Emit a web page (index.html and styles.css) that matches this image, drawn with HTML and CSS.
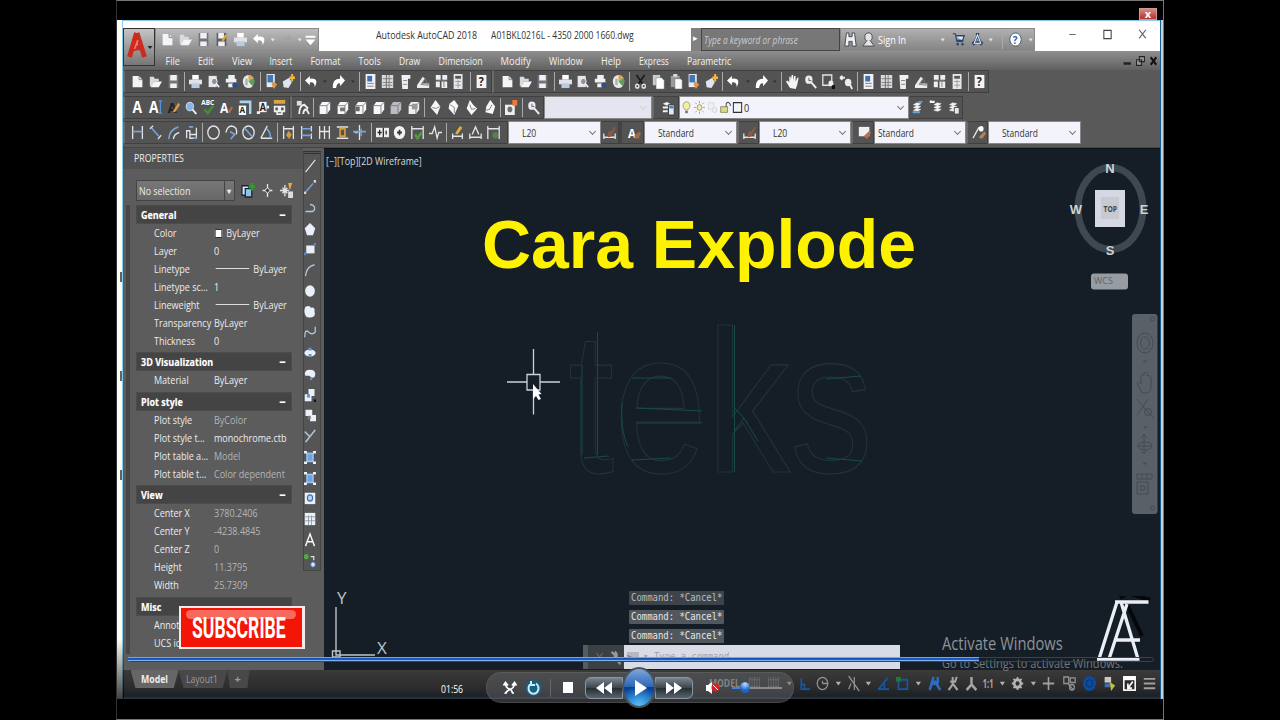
FILE: index.html
```
<!DOCTYPE html>
<html lang="en">
<head>
    <meta charset="UTF-8">
    <title>Autodesk AutoCAD 2018</title>
    <link rel="stylesheet" href="styles.css">
</head>
<body>
    <div class="player">
        <div class="player-top"><button class="close">x</button></div>
        <div class="video">
            <div class="edge-left"><i></i><i></i><i></i></div>
            <div class="app">
                <div class="top">
                    <div class="app-button"><svg width="31" height="37" viewBox="0 0 31 37"><path d="M5.500 28L12.500 4M20.500 28L13 4M7 21Q13 17 19 20" fill="none" stroke="#cc2b20" stroke-width="4.8"/><path d="M10.500 20L14 11" stroke="#f07a66" stroke-width="1.5"/><path d="M23.500 17h5l-2.500 3z" fill="#222"/></svg></div>
                    <div class="top-right">
                        <div class="titlebar">
                            <div class="quick icons" data-icons="new:19 open:18 save saveas:19 print:19 undo:18 dd:9 redoOff:18 dd:9 more:13"></div>
                            <div class="title"><span class="fit" data-w="101">Autodesk AutoCAD 2018</span></div>
                            <div class="file"><span class="fit" data-w="143">A01BKL0216L - 4350 2000 1660.dwg</span></div>
                            <div class="search-arrow">▸</div>
                            <div class="search"><span class="fit" data-w="94">Type a keyword or phrase</span></div>
                            <div class="account">
                                <span class="icons" data-icons="binoc:19 user:18"></span>
                                <span class="sign"><span class="fit" data-w="28">Sign In</span></span>
                                <span class="icons" data-icons="dd:10 cart:21 a360:18 dd:8 gap:6 sep:4 info:22 dd:7"></span>
                            </div>
                            <div class="window-buttons icons" data-icons="min:35 max:35 cross:35"></div>
                        </div>
                        <div class="menubar">
                            <div class="menus">
                                <div><span class="fit" data-w="14">File</span></div>
                                <div><span class="fit" data-w="16">Edit</span></div>
                                <div><span class="fit" data-w="20">View</span></div>
                                <div><span class="fit" data-w="23">Insert</span></div>
                                <div><span class="fit" data-w="30">Format</span></div>
                                <div><span class="fit" data-w="22">Tools</span></div>
                                <div><span class="fit" data-w="21">Draw</span></div>
                                <div><span class="fit" data-w="44">Dimension</span></div>
                                <div><span class="fit" data-w="30">Modify</span></div>
                                <div><span class="fit" data-w="34">Window</span></div>
                                <div><span class="fit" data-w="20">Help</span></div>
                                <div><span class="fit" data-w="30">Express</span></div>
                                <div><span class="fit" data-w="44">Parametric</span></div>
                            </div>
                            <div class="doc-buttons icons" data-icons="docmin:13 docmax:13 doccross:13"></div>
                        </div>
                    </div>
                </div>

                <div class="toolbars">
                    <div class="row">
                        <div class="toolbar icons" data-icons="new open save sep print preview publish globe sep sheet paint sep undo ddk redo ddk sep prop dc tool markup sset calc sep help gap:1"></div>
                        <div class="toolbar icons" data-icons="new open save sep print preview publish globe sep cut copy paste sheet paint sep undo ddk redo ddk sep hand zoomrt zoomwin zoomprev sep prop dc tool markup sset calc sep help"></div>
                    </div>
                    <div class="row">
                        <div class="toolbar icons" data-icons="tA tAI tEdit find spell tStyle tScale tJust tConv"></div>
                        <div class="toolbar icons close-up" data-icons="views sep cube cube2 cube3 cube cube4 cube5 sep iso iso2 iso3 iso4 sep camera sep zoomrt"></div>
                        <div class="combo dim"><b class="chev"></b></div>
                        <div class="toolbar icons" data-icons="gap:2 layers"></div>
                        <div class="combo layer">
                            <span class="icons" data-icons="bulb:13 sun:13 freeze:13 lock:13 square:12"></span><span class="fit" data-w="5">0</span><b class="chev"></b>
                        </div>
                        <div class="toolbar tail icons" data-icons="lay1 lay2 lay3"></div>
                    </div>
                    <div class="row">
                        <div class="toolbar icons" data-icons="dlin dali darc dord sep drad djog ddia dang sep dquick dbase dcont dspace dbreak sep dtol dcen dinsp djogl sep dedit dtedit dupd gap:5"></div>
                        <div class="combo"><span class="fit" data-w="14">L20</span><b class="chev"></b></div>
                        <div class="toolbar icons tail" data-icons="dbrush"></div>
                        <div class="toolbar icons short" data-icons="abrush"></div>
                        <div class="combo"><span class="fit" data-w="36">Standard</span><b class="chev"></b></div>
                        <div class="toolbar icons tiny" data-icons="dbrush"></div>
                        <div class="combo"><span class="fit" data-w="14">L20</span><b class="chev"></b></div>
                        <div class="toolbar icons tiny" data-icons="tbrush"></div>
                        <div class="combo near"><span class="fit" data-w="36">Standard</span><b class="chev"></b></div>
                        <div class="toolbar icons tiny" data-icons="mbrush"></div>
                        <div class="combo"><span class="fit" data-w="36">Standard</span><b class="chev"></b></div>
                    </div>
                </div>

                <div class="workspace">
                    <div class="palette">
                        <div class="palette-title"><span class="fit" data-w="50">PROPERTIES</span></div>
                        <div class="selection">
                            <div class="select"><span class="fit" data-w="51">No selection</span><b>▾</b></div>
                            <div class="icons" data-icons="toggle:19 pick:19 quick:19"></div>
                        </div>
                        <div class="sections" id="sections"></div>
                    </div>
                    <div class="draw-column"><div class="draw-tools" id="drawTools"></div></div>
                    <div class="canvas">
                        <div class="view-label"><span class="fit" data-w="96">[−][Top][2D Wireframe]</span></div>
                        <svg class="drawing" width="836" height="522" viewBox="324 148 836 522">
                            <text class="headline" x="482" y="268" textLength="434" lengthAdjust="spacingAndGlyphs">Cara Explode</text>
                            <text class="teks" x="568" y="472" textLength="305" lengthAdjust="spacingAndGlyphs">teks</text>
                            <g class="seams">
                                <path d="M582 365V455M597.500 332V455M584 458L609 456M632 378H671M637 408L702 411M637 423H702M632 460L671 458M734.500 325V472M734.500 408L744 418L758 441M734.500 431L744 418M826 379L861 376M826 458L862 461M622 403Q620 430 628 447"/>
                            </g>
                            <path d="M533.500 349V374M533.500 390V414.500M507 382H526.500M540 382H560M527 374.500H540V390H527Z" class="cross"/>
                            <path d="M533 384V399L536 396L538.500 400L541 399L538.500 394.500L541.500 394Z" fill="#fff"/>
                            <path d="M336 607V655H375M332.500 651H340V657H332.500Z" class="ucs"/>
                            <text class="axis" x="337" y="604">Y</text>
                            <text class="axis" x="377" y="654">X</text>
                            <ellipse cx="1110.500" cy="208.500" rx="32.500" ry="41" class="ring"/>
                            <path d="M1095 190H1125V227H1095Z" fill="#d5d7e2"/>
                            <path d="M1101 197H1119V219H1101Z" fill="#c8cad2"/>
                            <text class="top-face" x="1103.500" y="212" textLength="13.500" lengthAdjust="spacingAndGlyphs">TOP</text>
                            <g class="compass">
                                <text x="1110" y="172.500">N</text><text x="1110" y="255">S</text>
                                <text x="1076" y="214">W</text><text x="1144" y="214">E</text>
                            </g>
                            <rect x="1091" y="273.500" width="37" height="16" rx="3" fill="#969ca1"/>
                            <text class="wcs" x="1094" y="284">WCS</text>
                            <rect x="1132" y="314" width="25.500" height="200" rx="3" fill="#596067"/>
                            <g class="nav">
                                <ellipse cx="1145" cy="343" rx="8" ry="10"/><ellipse cx="1145" cy="343" rx="4.500" ry="6"/>
                                <path d="M1143.500 361h3l-1.500 1.500zM1144 427h3l-1.500 1.500zM1143.500 463h3l-1.500 1.500z"/>
                                <path d="M1141 391L1137 383Q1138 381 1141 384V375Q1143 373 1144 376V373Q1146 371 1147.500 374V376Q1150 374 1151 378V386Q1151 392 1147 393H1142Z"/>
                                <path d="M1137 399L1150 415M1148 399L1137 415"/><circle cx="1148" cy="412" r="3.500"/><path d="M1151 415L1154 419"/>
                                <path d="M1144 435V454M1138 446H1152M1141 438L1144 434L1147 438M1141 451L1144 454L1147 451"/><ellipse cx="1145" cy="446" rx="7" ry="4"/>
                                <path d="M1137 474H1152V479H1137ZM1142 474V479M1147 474V479M1137 482H1148V494H1137ZM1141 485V491L1146 488Z"/>
                                <circle cx="1152.500" cy="319" r="2"/><circle cx="1152.500" cy="508" r="2"/>
                            </g>
                        </svg>
                        <div class="history">
                            <div><span class="fit" data-w="91">Command: *Cancel*</span></div>
                            <div><span class="fit" data-w="91">Command: *Cancel*</span></div>
                            <div><span class="fit" data-w="91">Command: *Cancel*</span></div>
                        </div>
                        <div class="command">
                            <div class="command-tools icons" data-icons="cross:16 wrench:15"></div>
                            <div class="command-input"><b>&gt;_</b><span class="fit" data-w="86">▾ Type a command</span></div>
                        </div>
                        <div class="activate">
                            <div class="big"><span class="fit" data-w="121">Activate Windows</span></div>
                            <div><span class="fit" data-w="181">Go to Settings to activate Windows.</span></div>
                        </div>
                    </div>
                </div>

                <div class="statusbar">
                    <div class="tabs">
                        <div class="tab active"><span class="fit" data-w="27">Model</span></div>
                        <div class="tab"><span class="fit" data-w="32">Layout1</span></div>
                        <div class="tab add">+</div>
                    </div>
                    <div class="status">
                        <div class="model"><span class="fit" data-w="31">MODEL</span></div>
                        <div class="icons" data-icons="grid:21 grid:18 dd:12 ortho:19 polar:18 dd:12 isod:19 dd:11 angle:19 osnap:19 dd:12 ann:21 ann2:18 ann3:18 scale:16 dd:10 gear:22 dd:9 plus:22 units:19 hw:21 clean:20 full:20 burger:20"></div>
                    </div>
                </div>
            </div>
            <div class="edge-right"></div>

            <div class="shade"></div>
            <div class="subscribe"><div class="gloss"></div><span class="fit" data-w="94">SUBSCRIBE</span></div>
            <svg class="logo" width="66" height="66" viewBox="1092 596 66 66">
                <path d="M1120 598L1128 593L1150 600M1125 600L1142 636" stroke="#05080b" stroke-width="4" fill="none"/>
                <path d="M1117 602L1099 659M1127 604L1109 659M1121 602L1138 659M1115 602H1148.500M1115 640H1140M1097 659H1139.500" stroke="#eceef6" stroke-width="3.3" fill="none"/>
            </svg>
            <div class="seek"><div class="seek-done"></div></div>
        </div>
        <div class="time"><span class="fit" data-w="22">01:56</span></div>
        <div class="controls">
            <svg width="22" height="18" viewBox="0 0 22 18"><path d="M6.500 5Q7 9 10.500 10Q13 11 13.500 14M15.500 5Q15 9 11 10.500Q8 11.500 6.500 14H8M4.500 6.500L6.500 3.500L9 6.500M13 6.500L15.500 3.500L17.500 6.500M13 14H15" fill="none" stroke="#fff" stroke-width="1.7"/></svg>
            <svg width="25" height="24" viewBox="0 0 23 24"><circle cx="11.500" cy="12" r="8" fill="#1e5f7c"/><path d="M9 7.500A5 5.500 0 1 0 14 7.500M9 5V9H13" fill="none" stroke="#c4f0ff" stroke-width="2"/></svg>
            <div class="divider"></div>
            <div class="stop"></div>
            <div class="skip left"><svg width="16" height="12" viewBox="0 0 16 12"><path d="M8 0V12L0 6ZM16 0V12L8 6Z" fill="#fff"/></svg></div>
            <div class="play"><svg width="14" height="16" viewBox="0 0 14 16"><path d="M1 0L13 8L1 16Z" fill="#fff"/></svg></div>
            <div class="skip right"><svg width="16" height="12" viewBox="0 0 16 12"><path d="M0 0V12L8 6ZM8 0V12L16 6Z" fill="#fff"/></svg></div>
            <svg width="16" height="16" viewBox="0 0 16 16" class="mute"><path d="M1 5H3L7 2V14L3 11H1Z" fill="#fff"/><circle cx="10.500" cy="7.500" r="4" fill="#d92020"/><path d="M8 5L13 10" stroke="#fff"/></svg>
            <div class="volume"><i></i></div>
        </div>
    </div>

    <script>
        const page = '<path d="M2 2h8l4 4v8H2z" fill="#f4f5f8"/>';
        const a = (fill, x, size) => `<text x="${x}" y="14" font-size="${size}" fill="${fill}" class="ic-a">A</text>`;
        const cube = (f) => `<path d="M2 6L5 2H15V10L11 15H2Z" fill="${f}"/><path d="M2 6H11V15M11 6L15 2" class="k"/>`;
        const brush = '<path d="M6 9Q7 5 10 7L14 2L16 3L12 9Q11 13 6 13Z" fill="#8a5b40"/>';
        const stack = (x) => `<path d="M${x} 5l4-2 5 1-4 2zM${x} 8l4-2 5 1-4 2zM${x} 11l4-2 5 1-4 2z" fill="#f2f3f6" stroke="#f2f3f6" stroke-width=".6"/>`;

        // every glyph is drawn on a 16x16 grid
        const glyphs = {
            new: page + '<path d="M10 2v4h4" class="k"/>',
            open: '<path d="M1 3h5l1 2h5v3H6l-3 5H1z" fill="#d8dade"/><path d="M6 8h10l-4 6H2z" fill="#f4f5f8"/>',
            save: '<path d="M2 1h12v14H2z" fill="#70757b"/><path d="M4 1h8v6H4zM4 10h8v5H4z" fill="#f1f1f3"/>',
            saveas: '<path d="M2 1h12v14H2z" fill="#5b5f66"/><path d="M4 1h7v6H4zM4 10h8v5H4z" fill="#f1f1f3"/><path d="M8 9L13 2l2 2-5 6z" fill="#e3a93a"/>',
            print: '<path d="M4 1h8v5H4z" fill="#fff"/><path d="M0 6h16v5H0z" fill="#dfe2e8"/><path d="M3 10h10v5H3z" fill="#b9cbe0"/>',
            preview: '<path d="M2 2h10v12H2z" fill="#e5e6ea"/><circle cx="9" cy="8" r="3.500" fill="#8b939d" stroke="#fff"/><path d="M11 10l4 4" class="w2"/>',
            publish: '<path d="M4 1h8v4H4zM1 5h13v4H1zM4 10h6v4H4z" fill="#eef0f4"/><circle cx="12" cy="12" r="3" fill="#2f4f86"/>',
            globe: '<circle cx="8" cy="8" r="7" fill="#e9eae6"/><path d="M8 1v7l6-4A7 7 0 0 0 8 1z" fill="#e6a33a"/><path d="M8 8l6-4a7 7 0 0 1-1 9z" fill="#5ba05a"/><path d="M4 5h3v7H4z" fill="#9fb4c9"/>',
            sheet: '<path d="M2 0h10v14H2z" fill="#e8edf5"/><path d="M3 1h7v8H3z" fill="#3f78b8"/><path d="M10 8l5 3-4 5-3-5z" fill="#e59442"/>',
            paint: '<path d="M1 8l8-4 3 5-4 6-6-1z" fill="#dfe4ee"/><path d="M9 4h7M12.500 0v8" stroke="#f3b63e" stroke-width="2.500"/>',
            undo: '<path d="M6 2L0 7l6 5V9q6-1 6 5q6-10-6-9z" fill="#fff"/>',
            redo: '<path d="M10 1l6 6-6 6V10q-4-1-5 5H1Q0 5 10 5z" fill="#fff"/>',
            redoOff: '<path d="M10 3l5 4-5 4V9q-6-1-7 4q-2-8 7-8z" fill="#a4a4a4"/>',
            dd: '<path d="M5 6h7l-3.500 4z" fill="#e8e8e8"/>',
            ddk: '<path d="M5 6h7l-3.500 3z" fill="#2f2f2f"/>',
            more: '<path d="M2 4h12v2H2zM2 8h12l-6 6z" fill="#fff"/>',
            binoc: '<path d="M3 1h3v4h4V1h3l2 14h-5v-5H6v5H1z" fill="#f0f0f2" stroke="#39404a"/>',
            user: '<circle cx="8" cy="5.500" r="4.500" fill="#e3e3e5" stroke="#444"/><path d="M6 9L1 15h14l-5-6" fill="#e3e3e5" stroke="#444"/>',
            cart: '<path d="M1 2h3l2 8h8M5 4h10l-2 5H6" fill="#dfe6f4" stroke="#2b4674" stroke-width="1.500"/><circle cx="7" cy="13" r="1.500" fill="#2b4674"/><circle cx="13" cy="13" r="1.500" fill="#2b4674"/>',
            a360: '<path d="M8 4L4 11h8z" fill="none" stroke="#2b4674" stroke-width="2.500"/><path d="M8 1v5M2 13l4-3M14 13l-4-3" stroke="#2b4674" stroke-width="4"/><path d="M8 3L4 12h8z" fill="none" stroke="#eef2fb" stroke-width="1.200"/>',
            info: '<circle cx="8" cy="8" r="7" fill="#fff" stroke="#39506e"/><text x="4.500" y="13" font-size="12" font-weight="bold" fill="#2864b4">?</text>',
            min: '<path d="M4 8h8" stroke="#555"/>',
            max: '<path d="M3.500 3.500h9v9h-9z" fill="none" stroke="#444" stroke-width="1.300"/>',
            cross: '<path d="M4 3l8 9M12 3l-8 9" stroke="#666" stroke-width="1.300"/>',
            docmin: '<path d="M1 10h13v4H1z" fill="#222"/>',
            docmax: '<path d="M6 1h9v8H6zM1 6h9v9H1z" fill="#999" stroke="#222" stroke-width="1.800"/>',
            doccross: '<path d="M3 2l10 12M13 2L3 14" stroke="#111" stroke-width="3.500"/>',
            prop: '<path d="M2 0h12v16H2z" fill="#f0f2f6"/><path d="M4 2h6v6H4z" fill="#3b72b4"/><path d="M4 10h8M4 13h8" class="k"/>',
            dc: '<path d="M1 1h5v14H1zM7 1h8v14H7z" fill="#d9dbe0"/><path d="M2 5h12M2 9h12M2 12h12M10 1v14" class="k"/>',
            tool: '<path d="M3 1h11v4h-3v11H4z" fill="#eff0f4"/><path d="M5 7h5M5 11h5" class="k"/>',
            markup: '<path d="M0 12l7-9 3 2-4 5h9v5H0z" fill="#e9ebef"/><path d="M5 11l5-6 4 7z" class="k"/>',
            sset: '<path d="M1 1h6v5H1zM9 1h6v5H9zM1 8h5v6H1zM8 8h7v7H8z" fill="#eceef2"/><path d="M2 7h12M11 8v6" class="k"/>',
            calc: '<path d="M2 0h11v16H2z" fill="#e4e6ea"/><path d="M4 2h7v3H4z" fill="#555"/><path d="M4 8h7M4 12h7M7.500 6v9" stroke="#999"/>',
            help: '<path d="M2 1h12v14H2z" fill="#f3f4f6"/><text x="4.500" y="13" font-size="13" font-weight="bold" fill="#222">?</text>',
            cut: '<path d="M3 1l8 10M13 1L5 11" stroke="#1d1d1d" stroke-width="2"/><circle cx="4" cy="13" r="2" class="w"/><circle cx="12" cy="13" r="2" class="w"/>',
            copy: '<path d="M1 1h9v11H1z" fill="#c9ccd2"/><path d="M5 4h7l3 3v9H5z" fill="#fff" stroke="#666" stroke-width=".5"/>',
            paste: '<path d="M1 2h11v12H1z" fill="#9a9a9a"/><path d="M6 5h7l2 2v9H6z" fill="#f8f8fa" stroke="#555" stroke-width=".5"/><path d="M4 0h5v3H4z" fill="#ddd"/>',
            hand: '<path d="M5 15L0 8l2-1 2 2V3h1.800v4L7 1h1.800v6L10 2h1.800v6L14 4h1.500l-1.500 7-2 5z" fill="#f6f6f6"/>',
            zoomrt: '<circle cx="6" cy="6" r="4.500" fill="#e9eef4"/><path d="M9 9l6 6" class="w2"/><path d="M6 4v3h3" stroke="#555" fill="none"/>',
            zoomwin: '<path d="M1 1h11v11H1z" class="w"/><circle cx="11" cy="10" r="3" fill="#eef"/><path d="M12 12h4v4h-4z" fill="#111"/>',
            zoomprev: '<circle cx="10" cy="9" r="4" fill="#e9eef4"/><path d="M12 11l3 5M0 4h6M0 4l3-2M0 4l3 2" class="w2"/>',
            tA: a('#fff', 2, 17),
            tAI: a('#fff', 0, 17) + '<path d="M12 1h4M14 1v13M12 14h4" stroke="#5795db" stroke-width="1.500"/>',
            tEdit: a('#222', 1, 16) + '<path d="M7 12l7-9 2 2-6 8z" fill="#d99b45"/>',
            find: '<circle cx="6" cy="7" r="4.500" fill="#89b3e8" stroke="#dbe8f8"/><path d="M9 10l5 5" class="w2"/>',
            spell: '<text x="-1" y="5" font-size="8" font-weight="bold" fill="#fff">ABC</text><path d="M3 10l4 4 7-8" fill="none" stroke="#3f8d34" stroke-width="3"/>',
            tStyle: a('#fff', 0, 15) + '<path d="M9 13l5-6 2 1-4 6z" fill="#b56c48"/>',
            tScale: '<path d="M2 2h13v13" fill="none" stroke="#a5d4f5" stroke-width="3"/><path d="M1 6h9v10H1z" fill="#fff"/><text x="2" y="14" font-size="10" font-weight="bold" fill="#222">A</text>',
            tJust: '<path d="M4 2h9v11H4z" fill="#f3f3f5"/><text x="4.500" y="12" font-size="11" font-weight="bold" fill="#222">A</text><path d="M1 12h4v3H1zM13 6h3v3h-3z" fill="#eee"/>',
            tConv: '<path d="M1 0h14v4H1z" fill="#d8a644"/><path d="M2 7h5v5H2zM9 7h5v5H9zM5 12h6v3H5z" fill="none" stroke="#eee" stroke-width="2"/>',
            views: '<path d="M1 1h6v5H1z" fill="#ddd"/><path d="M4 15Q4 6 10 5l5 4M9 15q0-5 4-5l3 5" class="w2"/>',
            cube: cube('#f6f7fa'),
            cube2: cube('#f6f7fa') + '<path d="M5 8h6v4H5z" fill="#777"/>',
            cube3: cube('#f6f7fa') + '<path d="M2 7h5v5H2z" fill="#666"/>',
            cube4: cube('#b9bdc3'),
            cube5: cube('#f0f0f2') + '<path d="M6 4h7v6H6z" fill="#999"/>',
            iso: '<path d="M8 0l6 7-4 9-8-8z" fill="#f6f7fa"/><path d="M4 8l5 1 4-2" class="k"/>',
            iso2: '<path d="M9 0l5 6-5 10-7-7 1-5z" fill="#f6f7fa"/><path d="M4 5l5 3v6" class="k"/>',
            iso3: '<path d="M6 0l4 5 5 4-7 7-6-7z" fill="#f6f7fa"/><path d="M6 5l2 5 5-1" class="k"/>',
            iso4: '<path d="M9 0l6 7-3 8-9-2 1-6z" fill="#f6f7fa"/><path d="M3 11l5-1 3-5" class="k"/>',
            camera: '<path d="M0 5h12v11H0z" fill="#eee"/><circle cx="6" cy="10" r="3" fill="#6a7078"/><path d="M9 0h6v6H9z" fill="#ea7a35"/>',
            layers: '<path d="M1 4l5-2 4 2-4 2zM1 7h7v2H1zM1 11h6v2H1z" fill="#f2f2f4"/><path d="M8 5h7v11H8z" fill="#dde8f5" stroke="#333"/><path d="M9 6h5v3H9z" fill="#4a80bd"/>',
            bulb: '<path d="M8 1q5 0 5 5 0 2-3 5H6Q3 8 3 6q0-5 5-5z" fill="#f1efa0" stroke="#999068"/><path d="M6 12h4v3H6z" fill="#777"/>',
            sun: '<circle cx="8" cy="8" r="3.500" fill="#f3efa8" stroke="#8d8552"/><path d="M8 0v3M8 13v3M0 8h3M13 8h3M2 2l2 2M14 2l-2 2M2 14l2-2M14 14l-2-2" stroke="#9b9158"/>',
            freeze: '<path d="M2 2h8v8H2z" fill="#f0f0f4" stroke="#d0d0d8"/><circle cx="11" cy="11" r="3.500" fill="#ececf0" stroke="#d0d0d8"/>',
            lock: '<path d="M1 7h10v7H1z" fill="#d9da8a" stroke="#76764a"/><path d="M9 7V3q3-3 6 1v2" fill="none" stroke="#555" stroke-width="1.500"/>',
            square: '<path d="M2 2h12v12H2z" fill="none" stroke="#333" stroke-width="1.500"/>',
            lay1: stack(3) + '<path d="M2 13h9M9 2h5" stroke="#5fa5df" stroke-width="2"/>',
            lay2: stack(6) + '<path d="M1 2h6M1 2l2-1" class="w2"/>',
            lay3: stack(3) + '<path d="M9 8h6v7H9z" fill="#e6e8ec" stroke="#444"/>',
            dlin: '<path d="M2 1v14M14 1v14" class="w"/><path d="M2 7h12" class="b"/>',
            dali: '<path d="M1 4l4-3M11 15l4-4" class="w"/><path d="M3 3l9 9" class="b"/>',
            darc: '<path d="M2 15Q3 5 14 2" class="b"/><path d="M8 15q0-5 7-7" class="w"/>',
            dord: '<path d="M2 14V6h4v8h8V3M6 10h8" class="w"/><path d="M5 2h5M10 14h5" class="b"/>',
            drad: '<circle cx="8" cy="8" r="7" class="w"/>',
            djog: '<path d="M1 8Q3 1 8 1q8 1 6 9" class="w"/><path d="M7 15l5-5-6-3" class="b"/>',
            ddia: '<circle cx="8" cy="8" r="7" class="w"/><path d="M3 3l10 10" class="b"/>',
            dang: '<path d="M1 14h14M1 14L9 1" class="w"/><path d="M8 4q5 3 5 10" class="b"/>',
            dquick: '<path d="M2 1v14M14 1v14M2 4h12" class="w"/><path d="M8 6l4 4-3 5-4-4z" fill="#d99a36"/>',
            dbase: '<path d="M2 1v14M14 1v6M14 9v6" class="w"/><path d="M2 4h12M2 11h12" class="b"/>',
            dcont: '<path d="M2 1v14M8 1v14M14 1v14M2 7h12" class="w"/>',
            dspace: '<path d="M1 2h14M1 14h14" class="w"/><path d="M5 4h6v8H5z" fill="none" stroke="#d5a03c" stroke-width="2"/>',
            dbreak: '<path d="M8 0v16M2 8h4" class="w"/><path d="M0 7h16M10 4v8" class="b"/>',
            dtol: '<path d="M0 3h16v10H0z" fill="#eee"/><path d="M2 8h5M4.500 5v6M9 3v10M12.500 6v4" stroke="#222" stroke-width="1.500"/>',
            dcen: '<circle cx="8" cy="8" r="7" fill="#f3f3f3"/><path d="M5 8h6M8 5v6" stroke="#333" stroke-width="2"/>',
            dinsp: '<path d="M1 1v14M15 1v14M1 4h14" class="w"/><path d="M5 10l3 4 5-6" fill="none" stroke="#4f9a3b" stroke-width="3"/>',
            djogl: '<path d="M0 9h4l3-7 3 12 2-6h4" class="w"/>',
            dedit: '<path d="M2 9v6M14 9v6M2 12h12" class="w"/><path d="M5 9l6-8 3 2-6 7z" fill="#e0b13e"/>',
            dtedit: '<path d="M1 9v6M15 9v6M1 13h14M4 10l4-8 4 8" class="w"/>',
            dupd: '<path d="M1 1v14M15 1v14M1 4h14" class="w"/><circle cx="10" cy="11" r="3.500" fill="#5a7d49"/>',
            dbrush: '<path d="M1 9v6M15 9v6M1 13h14" class="w"/>' + brush,
            abrush: a('#fff', 0, 14) + '<path d="M8 11l6-4 2 2-3 6-5-1z" fill="#9c6b4b"/>',
            tbrush: '<path d="M1 2h13v10H1z" fill="#f0f0f2"/><path d="M7 12l7-6 2 2-5 7z" fill="#b56f4e"/>',
            mbrush: '<path d="M0 14L7 3h4" class="w"/><circle cx="10" cy="4" r="3" fill="#fff"/><path d="M7 13l7-6 2 2-5 6z" fill="#b18458"/>',
            toggle: '<path d="M0 3h8v10H0z" fill="#d5e9f8" stroke="#1a2430" stroke-width="1.500"/><path d="M4 6h8v9H4z" fill="#8fc3ea" stroke="#1a2430" stroke-width="1.500"/><path d="M8 4h8M12 0v8" stroke="#2f9a2b" stroke-width="3"/>',
            pick: '<path d="M8 1v14M2 8h12" class="w"/><path d="M8 5l3 3-3 3-3-3z" fill="#333" stroke="#fff"/>',
            quick: '<path d="M6 2v12M0 8h11M3 5l6 6M9 5l-6 6" class="w"/><path d="M10 0h5l-3 8z" fill="#f0a93b"/><path d="M10 9h6v7h-6z" fill="#ddd"/>',
            wrench: '<path d="M3 2l4 3v3l7 7M7 2q4 2 2 6" fill="none" stroke="#999" stroke-width="2.500"/>',
            line: '<path d="M2 15L15 1" class="w"/>',
            xline: '<path d="M3 13L12 4" class="b"/><path d="M0 13h3v3H0zM13 0h3v3h-3z" fill="#ddd2c8"/>',
            pline: '<path d="M2 12h9q4-1 3-5-2-3-6-3" class="lb"/>',
            poly: '<path d="M8 1l7 6-3 8H4L1 7z" class="s"/>',
            rect: '<path d="M3 4h11v9H3z" class="s"/><path d="M0 12h3v3H0zM13 1h3v3h-3z" fill="#5a86bd"/>',
            arc: '<path d="M2 15Q3 4 14 2" class="lb"/>',
            circle: '<circle cx="8" cy="8" r="6.500" class="s"/>',
            cloud: '<path d="M2 2q6-2 7 1 6-1 5 4 2 6-4 7-7 1-8-2-3-5 0-10z" class="s"/>',
            spline: '<path d="M1 14q0-10 5-6t9 0V2" class="lb"/>',
            ell: '<ellipse cx="8" cy="8" rx="7.500" ry="4" class="s"/><path d="M6 2h4v3H6zM6 9h4v3H6z" fill="#5f97d5"/>',
            earc: '<path d="M1 8q0-5 7-5t7 5-5 4l-3-2H2z" class="s"/><path d="M8 12h3v3H8z" fill="#5f97d5"/>',
            block: '<path d="M6 1h8v8H6zM1 7h9v8H1z" class="s"/><path d="M4 7h4v4H4z" fill="#5f97d5"/><path d="M13 13h3v3h-3z" fill="#111"/>',
            mkblock: '<path d="M2 2h9v7H2zM8 8h8v7H8z" class="s"/><path d="M5 9h4v4H5z" fill="#777"/>',
            point: '<path d="M2 15L15 1M1 3l7 6" class="lb"/>',
            hatch: '<path d="M3 3h10v11H3z" fill="#9bc2ee"/><path d="M0 1h4v3H0zM12 1h4v3h-4zM0 13h4v3H0zM12 13h4v3h-4z" class="s"/><path d="M5 5h6v7H5z" fill="#6ba4e2"/>',
            region: '<path d="M1 2h14v13H1z" class="s"/><circle cx="8" cy="8" r="3.500" fill="#b6d2f1" stroke="#3c6fae" stroke-width="1.500"/>',
            table: '<path d="M1 1h14v14H1z" class="s"/><path d="M1 5.500h14M1 10h14M6 4v11M10 4v11" stroke="#8d939b"/>',
            mtext: '<path d="M2 15L8 1L14 15M4 10H12" fill="none" stroke="#fff" stroke-width="1.800"/>',
            addsel: '<circle cx="3" cy="3" r="3" fill="#4fae3a"/><circle cx="12" cy="12" r="3" fill="#d7e6f7" stroke="#3d72b1"/><path d="M9 3h4v4" class="w"/>',
            grid: '<path d="M2 1v13M5 1v13M8 1v13M11 1v13M14 1v13M1 4h14M1 11h14" stroke="#6d7073"/>',
            ortho: '<path d="M4 2v12h11M4 9h4v5" class="blue"/>',
            polar: '<circle cx="8" cy="8" r="6.500" class="g"/><path d="M8 8h7M8 8V5" class="g"/>',
            isod: '<path d="M2 0l13 16M9 1v14M5 8l-3 6" class="g"/>',
            angle: '<path d="M1 14h14M2 14L13 2M9 8v5" class="blue"/>',
            osnap: '<path d="M3 4h11v10H3z" class="blue"/><path d="M0 1h6v5H0z" fill="#247443"/>',
            ann: '<path d="M7 1L2 15M8 5l7 10M3 8h10M12 1v6" fill="none" stroke="#2b6cc7" stroke-width="3"/>',
            ann2: '<path d="M7 1v8L2 15M7 8l6 7M4 6h7M12 1l-2 5" fill="none" stroke="#a4a6a8" stroke-width="2.500"/>',
            ann3: '<path d="M8 1v8L2 15M8 9l6 6" fill="none" stroke="#a4a6a8" stroke-width="3"/>',
            scale: '<text x="1" y="13" font-size="13" font-weight="bold" fill="#a8a8a8" textLength="13" lengthAdjust="spacingAndGlyphs">1:1</text>',
            gear: '<circle cx="8" cy="8" r="4" fill="none" stroke="#b5b5b5" stroke-width="3"/><path d="M8 1v3M8 12v3M1 8h3M12 8h3M3 3l2 2M11 11l2 2M13 3l-2 2M5 11l-2 2" stroke="#b5b5b5" stroke-width="2"/>',
            plus: '<path d="M8 1v14M1 8h14" stroke="#a0a0a0" stroke-width="2"/>',
            units: '<path d="M1 1h6v7H1zM9 2h6v5H9zM6 8l6 6" class="g"/><circle cx="11" cy="12" r="3" class="g"/>',
            hw: '<circle cx="8" cy="8" r="8" fill="#0e4aa0"/><circle cx="8" cy="8" r="4" fill="none" stroke="#0a2f6c"/>',
            clean: '<path d="M2 1h8v6H2z" fill="#c8c8ca"/><path d="M2 8h7v4H2z" fill="#3f6fb0"/><path d="M8 6l7 4-5 6z" fill="#b9c23f"/>',
            full: '<path d="M1 1h14v14H1z" fill="#2a2a2a" stroke="#f4f4f4" stroke-width="2"/><path d="M1 2.500h14" stroke="#fff" stroke-width="4"/><path d="M12 6l-5 6M6 8v5h5" fill="none" stroke="#fff" stroke-width="2"/>',
            burger: '<path d="M1 3h14M1 8h14M1 13h14" stroke="#a0a0a0" stroke-width="2"/>'
        };
        const widths = { sep: 4.5, dd: 9.5, ddk: 9.5 };

        function icon(spec) {
            const [name, w] = spec.split(":");
            const width = w || widths[name] || 17.75;
            return `<span class="icon i-${name}" style="width:${width}px">` +
                (glyphs[name] ? `<svg viewBox="0 0 16 16" preserveAspectRatio="none">${glyphs[name]}</svg>` : "") + "</span>";
        }

        const line = '<i class="sample"></i>';
        const sections = [
            ["General", [["Color", '<i class="swatch"></i>ByLayer'], ["Layer", "0"], ["Linetype", line + "ByLayer"], ["Linetype sc...", "1"],
                ["Lineweight", line + "ByLayer"], ["Transparency", "ByLayer"], ["Thickness", "0"]]],
            ["3D Visualization", [["Material", "ByLayer"]]],
            ["Plot style", [["Plot style", "ByColor", 1], ["Plot style t...", "monochrome.ctb"], ["Plot table a...", "Model", 1], ["Plot table t...", "Color dependent", 1]]],
            ["View", [["Center X", "3780.2406", 1], ["Center Y", "-4238.4845", 1], ["Center Z", "0", 1], ["Height", "11.3795", 1], ["Width", "25.7309", 1]]],
            ["Misc", [["Annot", ""], ["UCS ic", ""]]]
        ];
        document.getElementById("sections").innerHTML = sections.map(([name, rows]) => `
            <div class="section">
                <div class="section-head"><span class="sq">${name}</span><b>−</b></div>
                ${rows.map(([k, v, off]) => `<div class="prop"><div><span class="sq">${k}</span></div><div class="${off ? "off" : ""}"><span class="sq">${v}</span></div></div>`).join("")}
            </div>`).join("");

        document.getElementById("drawTools").innerHTML = ["line", "xline", "pline", "poly", "rect", "arc", "circle", "cloud", "spline", "ell",
            "earc", "block", "mkblock", "point", "hatch", "hatch", "region", "table", "mtext", "addsel"].map(icon).join("");

        document.querySelectorAll("[data-icons]").forEach(el => {
            el.innerHTML = el.dataset.icons.split(" ").map(icon).join("");
        });
        // labels are condensed to a fixed width
        document.querySelectorAll(".fit").forEach(el => {
            el.style.transform = `scaleX(${el.dataset.w / el.offsetWidth})`;
        });
    </script>
</body>
</html>
```
FILE: styles.css
```
* {
    box-sizing: border-box;
}

body {
    margin: 0;
    background: #000;
    font-family: "Open Sans", sans-serif;
    font-size: 11px;
    overflow: hidden;
}

.player {
    position: relative;
    width: 1048px;
    height: 720px;
    margin-left: 116px;
    border: 1px solid #777;
    border-left-color: #333;
    background: #000;
}

.player-top {
    height: 19px;
    display: flex;
    justify-content: flex-end;
    align-items: flex-end;
    padding-right: 6px;
}

.close {
    width: 18px;
    height: 12px;
    padding: 0;
    border: 1px solid #c99;
    background: linear-gradient(#d98a80, #b5302a);
    color: #fff;
    font: bold 11px/8px "Open Sans", sans-serif;
}

.video {
    position: relative;
    display: flex;
    height: 679px;
}

.edge-left {
    width: 6px;
    background: #fdfdf2;
    border-right: 1px solid #8cc8ea;
    display: flex;
    flex-direction: column;
    gap: 89px;
    padding: 252px 0 0 3px;
}

.edge-left i {
    height: 10px;
    flex: none;
    background: #59646b;
}

.edge-right {
    width: 4px;
    background: #c6d3d6;
    border-left: 1px solid #1c5f8e;
}

.app {
    width: 1037px;
    background: #5a5a5a;
    border-top: 1px solid #8cc8ea;
}

.fit,
.sq {
    display: inline-block;
    flex: none;
    white-space: nowrap;
    transform-origin: left center;
}

.sq {
    transform: scaleX(.82);
}

.icons {
    display: flex;
    align-items: center;
}

.icon {
    flex: none;
    display: flex;
    align-items: center;
    justify-content: center;
}

.icon svg {
    width: 13px;
    height: 15px;
    overflow: visible;
}

.i-dd svg,
.i-ddk svg {
    width: 9px;
    height: 12px;
}

.i-sep {
    height: 19px;
    background: linear-gradient(#aaa, #aaa) center / 1px 100% no-repeat;
}

.icon .w { fill: none; stroke: #e2e4e8; stroke-width: 1.6; }
.icon .w2 { fill: none; stroke: #eef0f4; stroke-width: 2.2; }
.icon .k { fill: none; stroke: #777; }
.icon .b { fill: none; stroke: #76a5dc; stroke-width: 1.8; }
.icon .lb { fill: none; stroke: #b4c6da; stroke-width: 1.7; }
.icon .s { fill: #eaf0fa; }
.icon .g { fill: none; stroke: #919496; stroke-width: 1.5; }
.icon .blue { fill: none; stroke: #1457a5; stroke-width: 2; }
.icon .ic-a { font-weight: bold; }

/* title and menu */
.top {
    display: flex;
    height: 49px;
    background: linear-gradient(#fff 30px, #8f8f8f 30px, #616161);
}

.app-button {
    width: 32px;
    height: 38px;
    margin-top: 7px;
    background: linear-gradient(#c4c4c4, #777);
    border: 1px solid #333;
}

.app-button svg {
    display: block;
}

.top-right {
    flex: 1;
}

.titlebar {
    display: flex;
    height: 30px;
    color: #333;
}

.quick {
    width: 164px;
    height: 23px;
    margin-top: 7px;
    padding-left: 2px;
    background: linear-gradient(#bcbcbc, #8f8f8f);
    border: 1px solid #8a8a8a;
}

.title {
    width: 115px;
    margin-left: 57px;
    padding-top: 6px;
}

.file {
    width: 200px;
    padding-top: 6px;
}

.title,
.file {
    white-space: nowrap;
}

.search-arrow {
    width: 10px;
    height: 23px;
    margin-top: 7px;
    background: #818181;
    color: #fff;
    text-align: center;
    line-height: 20px;
    font-size: 9px;
}

.search {
    width: 139px;
    height: 23px;
    margin-top: 7px;
    padding: 3px 0 0 2px;
    background: #777;
    border: 1px solid #444;
    color: #ccc;
    font-style: italic;
}

.account {
    display: flex;
    width: 195px;
    height: 23px;
    margin-top: 7px;
    background: linear-gradient(#b0b0b0, #858585);
    border: 1px solid #8a8a8a;
    color: #fff;
}

.sign {
    width: 66px;
    padding: 3px 0 0 0;
}

.window-buttons {
    flex: 1;
    justify-content: flex-end;
    padding-bottom: 3px;
}

.window-buttons .icon svg {
    width: 13px;
}

.menubar {
    display: flex;
    justify-content: space-between;
    height: 19px;
    color: #f2f2f2;
}

.menus {
    display: grid;
    grid-template-columns: 34px 32px 40px 38px 52px 36px 44px 58px 52px 48px 42px 44px 66px;
    padding-left: 1px;
}

.menus div {
    display: flex;
    justify-content: center;
    align-items: center;
}

.menus .fit {
    transform-origin: center;
}

.doc-buttons .icon svg {
    width: 9px;
    height: 10px;
}

/* toolbars */
.toolbars {
    height: 78px;
    display: flex;
    flex-direction: column;
    gap: 2.5px;
    padding-top: 0;
    background: #595959;
    border-bottom: 1px solid #444;
}

.row {
    display: flex;
    height: 23px;
}

.toolbar {
    padding-left: 4.5px;
    border: 1px solid #404040;
    border-left: 2px solid #6b6b6b;
    background: #535353;
}

.toolbar.close-up {
    padding-left: 2px;
}

.toolbar.tail {
    padding: 0;
    border-left: 0;
}

.toolbar.short {
    padding-left: 3px;
    border-left: 3px solid #444;
}

.toolbar.tiny {
    padding-left: 2px;
    border-left-width: 2px;
    width: 22.3px;
}

.combo {
    display: flex;
    align-items: center;
    width: 92.5px;
    padding-left: 13px;
    position: relative;
    background: #f3f3fb;
    border: 1px solid #888;
    color: #333;
}

.combo.near {
    padding-left: 3px;
}

.combo.dim {
    width: 108px;
    background: #e4e5ef;
}

.combo.dim .chev {
    opacity: .2;
}

.combo.layer {
    width: 230px;
    padding-left: 0;
}

.chev {
    position: absolute;
    right: 5px;
    top: 7px;
    width: 5px;
    height: 5px;
    border: solid #777;
    border-width: 0 1px 1px 0;
    transform: rotate(45deg);
}

.combo .icon svg {
    width: 11px;
    height: 13px;
}

/* workspace */
.workspace {
    display: flex;
    height: 522px;
}

.palette {
    width: 180px;
    background: #5c5c5c;
    color: #ececec;
    overflow: hidden;
}

.palette-title {
    height: 21px;
    padding: 2px 0 0 11px;
    background: #525252;
}

.selection {
    display: flex;
    align-items: flex-end;
    height: 36px;
    padding: 0 0 4px 13px;
}

.select {
    display: flex;
    align-items: center;
    justify-content: space-between;
    width: 99px;
    height: 21px;
    margin-right: 4px;
    padding-left: 2px;
    background: linear-gradient(#777, #686868);
    border: 1px solid #444;
}

.selection .icons {
    height: 21px;
}

.select b {
    width: 10px;
    border-left: 1px solid #444;
    text-align: center;
    font-size: 8px;
    line-height: 20px;
}

.sections {
    margin-left: 3px;
    padding-left: 6px;
    border-left: 4px solid #474747;
}

.section {
    width: 156px;
    padding-bottom: 2.4px;
}

.section-head {
    display: flex;
    justify-content: space-between;
    align-items: center;
    height: 19px;
    padding: 0 5px 0 4px;
    background: #444;
    border: 1px solid #4c4c4c;
    color: #fff;
    font-weight: bold;
    text-shadow: 0 0 1px #888;
}

.prop {
    display: grid;
    grid-template-columns: 60px 1fr;
    height: 18px;
    padding-left: 18px;
    line-height: 18px;
    white-space: nowrap;
}

.off {
    color: #b4b4b4;
}

.swatch {
    display: inline-block;
    width: 9px;
    height: 9px;
    margin: 0 5px 0 1px;
    background: #fff;
    border: 1px solid #333;
    vertical-align: -1px;
}

.sample {
    display: inline-block;
    width: 41px;
    height: 1px;
    margin: 0 5px 4px 2px;
    background: #ddd;
}

.draw-column {
    width: 21px;
    padding-top: 3px;
    background: #5c5c5c;
}

.draw-tools {
    width: 18px;
    height: 420px;
    padding-top: 2px;
    border: 1px solid #444;
    border-top: 3px double #333;
    background: #555;
}

.draw-tools .icon {
    height: 20.75px;
    margin-left: -2px;
}

.draw-tools .icon svg {
    width: 12px;
    height: 14px;
}

.canvas {
    position: relative;
    width: 836px;
    background: #151e26;
    border-top: 1px solid #0d1216;
}

.drawing {
    position: absolute;
    left: 0;
    top: -1px;
}

.view-label {
    padding: 4px 0 0 2px;
    color: #d9d9d9;
}

.headline {
    font: bold 68px "Liberation Sans", Arial, sans-serif;
    fill: #fff200;
}

.teks {
    font: 202px "Liberation Sans", Arial, sans-serif;
    fill: none;
    stroke: #21343a;
    stroke-width: 1.2;
}

.seams { fill: none; stroke: #174b4b; }
.cross { fill: none; stroke: #ccd2da; stroke-width: 1.3; }
.ucs { fill: none; stroke: #bfc4c8; stroke-width: 1.4; }
.axis { font: 17px "Open Sans", sans-serif; fill: #bfc4c8; }
.ring { fill: none; stroke: #3d4850; stroke-width: 7; }
.top-face { font: bold 9px "Open Sans", sans-serif; fill: #444; }
.compass { font: bold 13px "Liberation Sans", sans-serif; fill: #cfd2d6; text-anchor: middle; }
.wcs { font: 9px "Open Sans", sans-serif; fill: #5f666b; }
.nav { fill: none; stroke: #444b52; }

.history {
    position: absolute;
    left: 305px;
    top: 442px;
    width: 95px;
    display: flex;
    flex-direction: column;
    gap: 5px;
    color: #e4e6e8;
    font: 10.5px/13px "DejaVu Sans Mono", monospace;
}

.history div {
    height: 14px;
    padding-left: 2px;
    background: #50585e;
    border-radius: 1px;
}

.history div:first-child {
    background: #3c444a;
    color: #b9bcc0;
}

.command {
    position: absolute;
    left: 259px;
    top: 496px;
    width: 317px;
    height: 24px;
    display: flex;
}

.command-tools {
    width: 41px;
    padding-left: 4px;
    background: #3b4044;
    border-left: 5px solid #555b60;
}

.command-tools .icon svg {
    stroke: #999;
}

.command-input {
    flex: 1;
    display: flex;
    align-items: center;
    gap: 4px;
    padding: 0 0 1px 3px;
    background: #d9dce6;
    color: #a1a4ad;
    font: italic 11px "DejaVu Sans Mono", monospace;
}

.command-input b {
    width: 12px;
    background: #b5b8c0;
    color: #777;
    font-size: 9px;
}

.activate {
    position: absolute;
    left: 618px;
    top: 481px;
    width: 190px;
    color: #74797d;
    font-size: 13px;
    line-height: 18px;
    white-space: nowrap;
}

.activate .big {
    height: 24px;
    font-size: 18px;
    line-height: 26px;
    color: #8d9296;
}

/* status bar */
.statusbar {
    display: flex;
    justify-content: space-between;
    height: 29px;
    background: linear-gradient(#3a3a3a, #2d2d2e 60%, #1b2024);
    border-bottom: 2px solid #27333c;
}

.tabs {
    display: flex;
    padding-left: 8px;
}

.tab {
    width: 49px;
    height: 18px;
    padding-left: 7px;
    background: #484848;
    color: #9a9a9a;
    line-height: 17px;
    clip-path: polygon(0 0, 100% 0, 90% 100%, 10% 100%);
}

.tab.active {
    width: 48px;
    padding-left: 10px;
    background: #666;
    color: #eee;
    font-weight: bold;
}

.tab.add {
    width: 22px;
    padding-left: 7px;
    font-weight: bold;
}

.status {
    display: flex;
}

.model {
    width: 38px;
    padding: 5px 0 0 3px;
    color: #a5a5a5;
    font-weight: bold;
}

.status .icon svg {
    height: 15px;
}

.status .i-dd svg {
    width: 12px;
    opacity: .7;
}

/* things lying over the recording */
.shade {
    position: absolute;
    left: 0;
    top: 619px;
    width: 7px;
    height: 60px;
    background: linear-gradient(transparent, rgba(0, 0, 0, .75));
}

.subscribe {
    position: absolute;
    left: 62px;
    top: 586px;
    width: 126px;
    height: 43px;
    padding-left: 11px;
    background: #f31505;
    border: 2px solid #f5eaea;
    border-right-width: 3px;
    color: #fff;
    font: bold 30px/40px Roboto, sans-serif;
}

.gloss {
    position: absolute;
    left: 5px;
    top: 2px;
    width: 110px;
    height: 9px;
    border-radius: 5px;
    background: #f9695d;
}

.subscribe .fit {
    position: relative;
}

.logo {
    position: absolute;
    left: 975px;
    top: 576px;
}

.seek {
    position: absolute;
    left: 11px;
    top: 637px;
    width: 1026px;
    height: 5px;
    border: 1px solid #3b4249;
    border-radius: 3px;
}

.seek-done {
    width: 851px;
    height: 4px;
    margin: -1px 0 0 -1px;
    background: linear-gradient(#6ea8ea 1px, #1450b4 1px, #1f62c6 3px, #7fb0ec 3px);
}

.time {
    position: absolute;
    left: 324px;
    top: 680px;
    color: #fff;
}

.controls {
    position: absolute;
    left: 369px;
    top: 671px;
    width: 308px;
    height: 31px;
    display: flex;
    align-items: center;
    padding-left: 12px;
    border-radius: 15px;
    background: rgba(95, 98, 101, .5);
    border: 1px solid rgba(130, 130, 130, .25);
}

.divider {
    width: 1px;
    height: 18px;
    margin: 0 12px 0 4px;
    background: #666;
}

.stop {
    width: 10px;
    height: 11px;
    margin-right: 12px;
    background: #fff;
}

.skip {
    display: flex;
    align-items: center;
    justify-content: center;
    width: 38px;
    height: 22px;
    background: linear-gradient(#79848c, #39444c 50%, #232c33 50%, #58656e);
    border: 1px solid #8c969c;
}

.skip.left { border-radius: 6px 0 0 6px; }
.skip.right { border-radius: 0 6px 6px 0; }

.play {
    display: flex;
    align-items: center;
    justify-content: center;
    flex: none;
    width: 34px;
    height: 41px;
    margin: 0 -1px;
    padding-left: 3px;
    z-index: 1;
    border-radius: 50%;
    border: 2px solid #4a5258;
    background: radial-gradient(circle at 50% 100%, #55c3f8, transparent 50%), linear-gradient(#7ba7dc, #2b66b4 48%, #0a3f94 50%, #1465bd);
}

.mute {
    margin: 0 11px 0 12px;
}

.volume {
    width: 50px;
    height: 2px;
    background: linear-gradient(90deg, #3f83d6 12px, #888 12px);
}

.volume i {
    display: block;
    width: 10px;
    height: 11px;
    margin: -5px 0 0 8px;
    border-radius: 50%;
    background: radial-gradient(circle at 50% 20%, #bde0ff, #1d62c4 60%);
}
```
